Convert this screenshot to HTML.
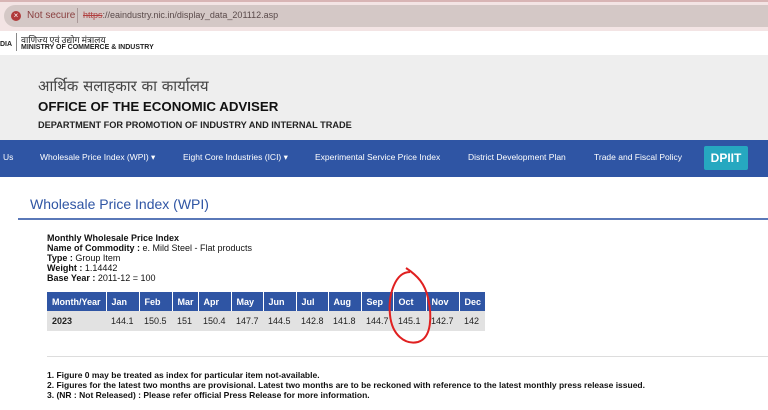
<!DOCTYPE html>
<html><head><style>
*{margin:0;padding:0;box-sizing:border-box}
body{width:768px;height:410px;overflow:hidden;background:#fff;font-family:"Liberation Sans",Arial,sans-serif;position:relative}
.abs{position:absolute}
table{table-layout:fixed}
td,th{font-size:9px;padding:0 0 0 5px;text-align:left;white-space:nowrap;overflow:hidden}
</style></head><body>
<div class="abs" style="left:0;top:0;width:768px;height:31px;background:#f3e4e4;border-top:2px solid #d8b5b5"></div>
<div class="abs" style="left:4px;top:5px;width:764px;height:22px;background:#d4c8c6;border-radius:11px 0 0 11px"></div>
<div class="abs" style="left:11px;top:11px;width:10px;height:10px;border-radius:50%;background:#b03a3a;color:#fff;font-size:8px;line-height:10px;text-align:center">×</div>
<div class="abs" style="left:27px;top:10px;font-size:10px;color:#8a4040">Not secure</div>
<div class="abs" style="left:77px;top:8px;width:1px;height:15px;background:#a99"></div>
<div class="abs" style="left:83px;top:10px;font-size:9px;color:#5a4a4a"><span style="text-decoration:line-through;color:#b04040">https</span>://eaindustry.nic.in/display_data_201112.asp</div>
<div class="abs" style="left:0;top:41px;font-size:7px;font-weight:bold;color:#222">DIA</div>
<div class="abs" style="left:16px;top:33px;width:1px;height:18px;background:#888"></div>
<div class="abs" style="left:21px;top:33px;font-size:9px;color:#222;font-family:'Noto Sans CJK SC','DejaVu Sans',sans-serif">वाणिज्य एवं उद्योग मंत्रालय</div>
<div class="abs" style="left:21px;top:44px;font-size:7px;font-weight:bold;color:#222">MINISTRY OF COMMERCE &amp; INDUSTRY</div>
<div class="abs" style="left:0;top:55px;width:768px;height:85px;background:#eeeeee"></div>
<div class="abs" style="left:38px;top:76px;font-size:15px;color:#444;font-family:'DejaVu Sans',sans-serif">आर्थिक सलाहकार का कार्यालय</div>
<div class="abs" style="left:38px;top:99px;font-size:13.3px;font-weight:bold;color:#111">OFFICE OF THE ECONOMIC ADVISER</div>
<div class="abs" style="left:38px;top:120px;font-size:9.2px;font-weight:bold;color:#222">DEPARTMENT FOR PROMOTION OF INDUSTRY AND INTERNAL TRADE</div>
<div class="abs" style="left:0;top:140px;width:768px;height:37px;background:#2f55a4;color:#fff;font-size:8.5px">
<span class="abs" style="left:3px;top:12px">Us</span>
<span class="abs" style="left:40px;top:12px">Wholesale Price Index (WPI) ▾</span>
<span class="abs" style="left:183px;top:12px">Eight Core Industries (ICI) ▾</span>
<span class="abs" style="left:315px;top:12px">Experimental Service Price Index</span>
<span class="abs" style="left:468px;top:12px">District Development Plan</span>
<span class="abs" style="left:594px;top:12px">Trade and Fiscal Policy</span>
<span class="abs" style="left:704px;top:6px;width:44px;height:24px;background:#26a8c0;border-radius:2px;font-weight:bold;font-size:12px;text-align:center;line-height:24px">DPIIT</span>
</div>
<div class="abs" style="left:30px;top:196px;font-size:14px;color:#2f55a4">Wholesale Price Index (WPI)</div>
<div class="abs" style="left:18px;top:218px;width:750px;height:2px;background:#5a78b8"></div>
<div class="abs" style="left:47px;top:233px;font-size:9px;line-height:10px;color:#111">
<b>Monthly Wholesale Price Index</b><br><b>Name of Commodity :</b> e. Mild Steel - Flat products<br><b>Type :</b> Group Item<br><b>Weight :</b> 1.14442<br><b>Base Year :</b> 2011-12 = 100</div>
<table class="abs" style="left:47px;top:292px;border-collapse:collapse;width:438px">
<colgroup><col style="width:59px"><col style="width:33px"><col style="width:33px"><col style="width:26px"><col style="width:33px"><col style="width:32px"><col style="width:33px"><col style="width:32px"><col style="width:33px"><col style="width:32px"><col style="width:33px"><col style="width:33px"><col style="width:26px"></colgroup>
<tr style="background:#2f55a4;color:#fff;height:19px"><th style="border-right:1px solid #fff">Month/Year</th><th style="border-right:1px solid #fff">Jan</th><th style="border-right:1px solid #fff">Feb</th><th style="border-right:1px solid #fff">Mar</th><th style="border-right:1px solid #fff">Apr</th><th style="border-right:1px solid #fff">May</th><th style="border-right:1px solid #fff">Jun</th><th style="border-right:1px solid #fff">Jul</th><th style="border-right:1px solid #fff">Aug</th><th style="border-right:1px solid #fff">Sep</th><th style="border-right:1px solid #fff">Oct</th><th style="border-right:1px solid #fff">Nov</th><th>Dec</th></tr>
<tr style="background:#e2e2e2;color:#222;height:20px"><td style="font-weight:bold">2023</td><td>144.1</td><td>150.5</td><td>151</td><td>150.4</td><td>147.7</td><td>144.5</td><td>142.8</td><td>141.8</td><td>144.7</td><td>145.1</td><td>142.7</td><td>142</td></tr>
</table>
<svg class="abs" style="left:0;top:0" width="768" height="410"><path d="M410 272 C395 272 388 295 390 315 C392 335 405 345 418 342 C432 338 432 315 428 298 C425 284 418 276 406 268" fill="none" stroke="#e02020" stroke-width="2"/></svg>
<div class="abs" style="left:47px;top:356px;width:721px;height:1px;background:#ddd"></div>
<div class="abs" style="left:47px;top:370px;font-size:8.5px;line-height:10px;color:#111;font-weight:bold;white-space:nowrap">1. Figure 0 may be treated as index for particular item not-available.<br>2. Figures for the latest two months are provisional. Latest two months are to be reckoned with reference to the latest monthly press release issued.<br>3. (NR : Not Released) : Please refer official Press Release for more information.</div>
</body></html>
